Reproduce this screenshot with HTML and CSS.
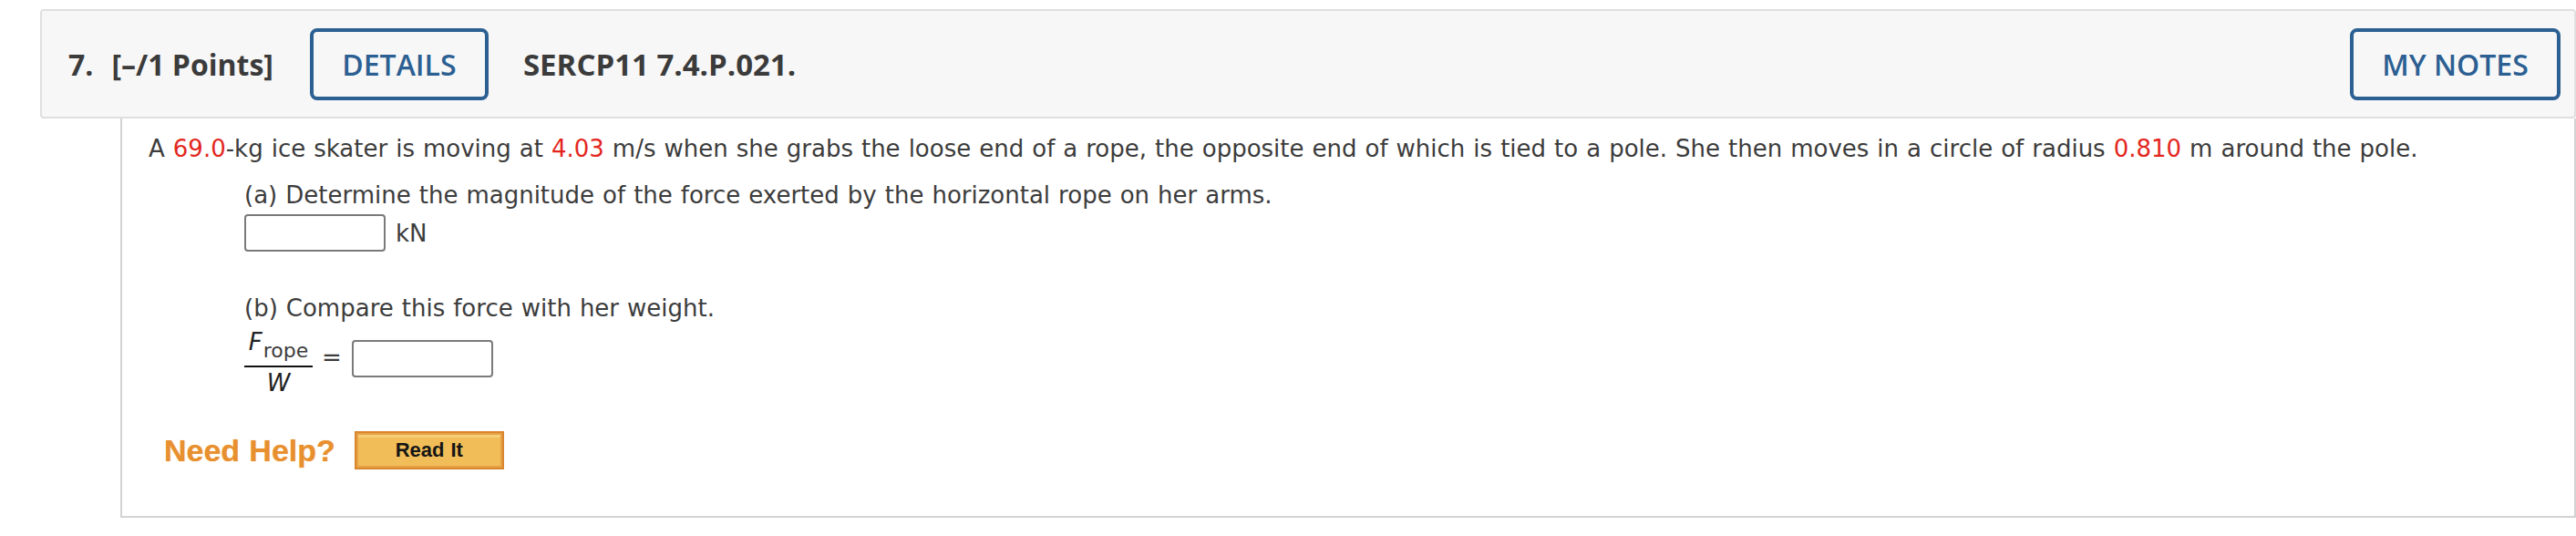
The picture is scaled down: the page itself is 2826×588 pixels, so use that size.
FILE: index.html
```html
<!DOCTYPE html>
<html lang="en">
<head>
<meta charset="utf-8">
<title>Question 7</title>
<link rel="stylesheet" href="styles.css">
</head>
<body>
<div class="page">
  <div class="qhead">
    <span class="qnum">7.</span>
    <span class="qpts">[–/1 Points]</span>
    <button class="btn-outline details">DETAILS</button>
    <span class="qid">SERCP11 7.4.P.021.</span>
    <button class="btn-outline notes">MY NOTES</button>
  </div>
  <div class="qbody">
    <p class="stem">A <span class="red">69.0</span>-kg ice skater is moving at <span class="red">4.03</span> m/s when she grabs the loose end of a rope, the opposite end of which is tied to a pole. She then moves in a circle of radius <span class="red">0.810</span> m around the pole.</p>
    <div class="part part-a">
      <p class="prompt">(a) Determine the magnitude of the force exerted by the horizontal rope on her arms.</p>
      <div class="answer">
        <span class="field"></span>
        <span class="unit">kN</span>
      </div>
    </div>
    <div class="part part-b">
      <p class="prompt">(b) Compare this force with her weight.</p>
      <div class="answer answer-frac">
        <span class="frac">
          <span class="num"><i class="var">F</i><span class="sub">rope</span></span>
          <span class="den"><i class="var">W</i></span>
        </span>
        <span class="eq">=</span>
        <span class="field field-frac"></span>
      </div>
    </div>
    <div class="help">
      <span class="need">Need Help?</span>
      <span class="readit">Read It</span>
    </div>
  </div>
</div>
</body>
</html>
```

FILE: styles.css
```css
html, body {
  margin: 0;
  padding: 0;
  background: #ffffff;
}

.page {
  padding: 10px 0 0 44px;
  width: 2782px;
}

.qhead {
  display: flex;
  align-items: center;
  box-sizing: border-box;
  height: 120px;
  width: 2782px;
  padding: 0 15px 0 29px;
  background: #f7f7f7;
  border: 2px solid #e0e0e0;
  border-radius: 4px;
  font-family: "Open Sans", "Liberation Sans", sans-serif;
  color: #3b3b3b;
}

.qnum {
  font-size: 32px;
  font-weight: 700;
  margin-right: 20px;
}

.qpts {
  font-size: 32px;
  font-weight: 700;
}

.qid {
  font-size: 33px;
  font-weight: 700;
}

.btn-outline {
  box-sizing: border-box;
  height: 79px;
  border: 4px solid #2c5f92;
  border-radius: 8px;
  background: transparent;
  color: #2c5f92;
  font-family: "Open Sans", "Liberation Sans", sans-serif;
  font-size: 32px;
  font-weight: 600;
  padding: 0;
  display: flex;
  align-items: center;
  justify-content: center;
}

.details {
  width: 196px;
  margin: 0 38px 0 40px;
}

.notes {
  width: 231px;
  margin-left: auto;
}

.qbody {
  box-sizing: border-box;
  margin-left: 88px;
  width: 2694px;
  padding: 18px 0 51px 29px;
  border-left: 2px solid #d3d3d3;
  border-right: 2px solid #d3d3d3;
  border-bottom: 2px solid #d3d3d3;
  font-family: "DejaVu Sans", Verdana, sans-serif;
  font-size: 26px;
  word-spacing: 0.75px;
  color: #3c3c3c;
}

.stem, .prompt {
  margin: 0;
  line-height: 30px;
}

.red {
  color: #e3261d;
}

.part {
  margin-left: 105px;
}

.part-a {
  margin-top: 21px;
}

.part-b {
  margin-top: 47px;
}

.answer {
  display: flex;
  align-items: center;
  margin-top: 6px;
}

.answer-frac {
  align-items: flex-start;
}

.field {
  box-sizing: border-box;
  width: 155px;
  height: 41px;
  border: 2px solid #7a7a7a;
  border-radius: 4px;
  background: #ffffff;
}

.field-frac {
  margin-top: 14px;
}

.unit {
  margin-left: 11px;
}

.frac {
  display: inline-flex;
  flex-direction: column;
  align-items: center;
  width: 75px;
}

.num {
  display: flex;
  align-items: flex-start;
  justify-content: center;
  width: 75px;
  height: 39px;
  padding-top: 3px;
  border-bottom: 2px solid #111111;
  line-height: 26px;
}

.var {
  font-style: italic;
  font-size: 26px;
  color: #222222;
}

.sub {
  font-size: 22px;
  line-height: 22px;
  margin-top: 12px;
  margin-left: 1px;
}

.den {
  line-height: 30px;
  margin-top: 2px;
}

.eq {
  line-height: 30px;
  margin: 18px 11px 0 10px;
}

.help {
  display: flex;
  align-items: center;
  margin: 38px 0 0 17px;
}

.need {
  font-family: "Liberation Sans", Arial, sans-serif;
  font-weight: 700;
  font-size: 34px;
  color: #e8902f;
  text-shadow: 0 0 1px rgba(232, 144, 47, 0.6);
  margin-right: 21px;
}

.readit {
  box-sizing: border-box;
  width: 164px;
  height: 42px;
  display: flex;
  align-items: center;
  justify-content: center;
  border: 2px solid #d8862f;
  background: #f1bd58;
  box-shadow: inset 0 0 0 2px #e7a144, inset 0 3px 0 2px #f6cf7a;
  font-family: "Liberation Sans", Arial, sans-serif;
  font-weight: 700;
  font-size: 22px;
  color: #151515;
}
```
